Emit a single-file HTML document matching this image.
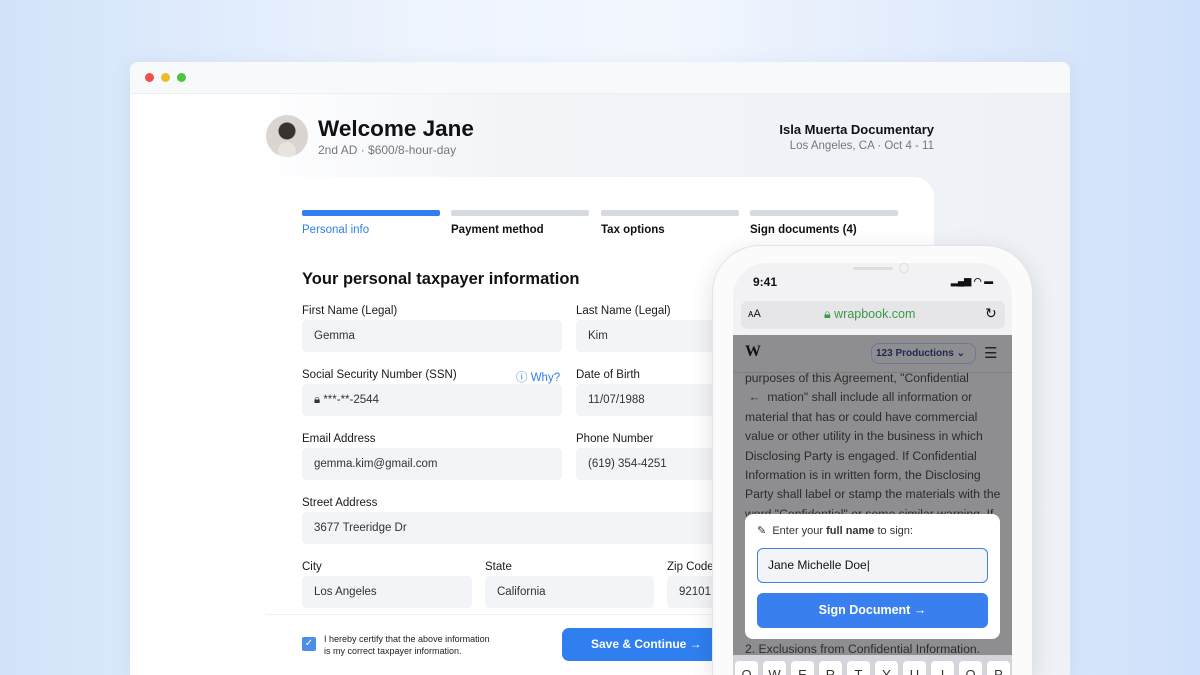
<!DOCTYPE html>
<html><head><meta charset="utf-8"><style>
*{box-sizing:border-box;margin:0;padding:0}
html{width:1200px;height:675px;overflow:hidden}
body{width:1200px;height:675px;overflow:hidden;font-family:"Liberation Sans",sans-serif;background:linear-gradient(90deg,#d2e3fa 0%,#eef4fd 35%,#f3f7fe 55%,#cfe0fa 100%);position:relative;color:#111}
.win{position:absolute;left:130px;top:62px;width:940px;height:613px;background:#f3f5f8;border-radius:8px 8px 0 0;overflow:hidden;box-shadow:0 4px 20px rgba(80,120,180,.12)}
.bar{height:32px;background:#f8f9fb;border-bottom:1px solid #eceff3;position:relative}
.dot{position:absolute;top:11px;width:9px;height:9px;border-radius:50%}
.content{position:absolute;top:32px;left:0;right:0;bottom:0;background:linear-gradient(90deg,#fff 0%,#fff 12%,#f2f4f8 40%,#eef1f6 100%)}
.abs{position:absolute}
.card{position:absolute;left:136px;top:83px;width:668px;height:498px;background:#fff;border-radius:20px 20px 0 0}
.lbl{position:absolute;font-size:11.5px;color:#1a1a1a}
.fld{position:absolute;height:32px;background:#f3f4f7;border-radius:4px;font-size:11.5px;color:#333;line-height:32px;padding-left:12px}
.step{position:absolute;top:33px;height:6px;border-radius:2px;background:#d5dae2;width:138px}
.stxt{position:absolute;top:47px;font-size:11.5px;font-weight:bold;color:#111}
.phone{position:absolute;left:712px;top:245px;width:321px;height:430px;background:#fbfbfc;border-radius:48px 48px 0 0;border:1px solid #e2e4e8;border-bottom:none;box-shadow:0 6px 24px rgba(0,0,0,.12)}
.screen{position:absolute;left:20px;top:17px;width:279px;height:413px;border-radius:34px 34px 0 0;overflow:hidden;background:#f2f2f4}
.doc{position:absolute;left:0;top:72px;width:279px;height:400px;background:#8e8e90}
.doc p{font-size:12.2px;line-height:19.4px;color:#2c2c2c;padding-left:12px;position:absolute;left:0;width:279px;white-space:nowrap}
.key{position:absolute;top:398px;width:23px;height:30px;background:#fff;border-radius:4px;font-size:13px;text-align:center;line-height:28px;color:#333}
</style></head><body>
<div class="win">
 <div class="bar"><div class="dot" style="left:15px;background:#f0514b"></div><div class="dot" style="left:31px;background:#e9bc2b"></div><div class="dot" style="left:47px;background:#4fc43f"></div></div>
 <div class="content">
  <div class="abs" style="left:136px;top:21px;width:42px;height:42px;border-radius:50%;background:radial-gradient(circle at 50% 38%,#3a3230 0 8px,#d9d6d2 9px);overflow:hidden"><div style="position:absolute;left:12px;top:27px;width:18px;height:18px;border-radius:50%;background:#e8e4de"></div></div>
  <div class="abs" style="left:188px;top:22px;font-size:22.5px;font-weight:bold">Welcome Jane</div>
  <div class="abs" style="left:188px;top:49px;font-size:12px;color:#777">2nd AD · $600/8-hour-day</div>
  <div class="abs" style="right:136px;top:28px;font-size:13px;font-weight:bold;text-align:right">Isla Muerta Documentary</div>
  <div class="abs" style="right:136px;top:46px;font-size:11.5px;color:#777;text-align:right">Los Angeles, CA · Oct 4 - 11</div>
  <div class="card">
   <div class="step" style="left:36px;background:#2f7ff0"></div>
   <div class="step" style="left:185px"></div><div class="step" style="left:335px"></div><div class="step" style="left:484px;width:148px"></div>
   <div class="stxt" style="left:36px;color:#2f7ff0;font-weight:normal">Personal info</div>
   <div class="stxt" style="left:185px">Payment method</div>
   <div class="stxt" style="left:335px">Tax options</div>
   <div class="stxt" style="left:484px">Sign documents (4)</div>
   <div class="abs" style="left:36px;top:93px;font-size:16.5px;font-weight:bold">Your personal taxpayer information</div>
   <div class="lbl" style="left:36px;top:128px">First Name (Legal)</div><div class="lbl" style="left:310px;top:128px">Last Name (Legal)</div>
   <div class="fld" style="left:36px;top:143px;width:260px">Gemma</div><div class="fld" style="left:310px;top:143px;width:200px">Kim</div>
   <div class="lbl" style="left:36px;top:192px">Social Security Number (SSN)</div><div class="lbl" style="left:250px;top:192px;color:#2f7ff0">ⓘ Why?</div><div class="lbl" style="left:310px;top:192px">Date of Birth</div>
   <div class="fld" style="left:36px;top:207px;width:260px">🔒︎ ***-**-2544</div><div class="fld" style="left:310px;top:207px;width:200px">11/07/1988</div>
   <div class="lbl" style="left:36px;top:256px">Email Address</div><div class="lbl" style="left:310px;top:256px">Phone Number</div>
   <div class="fld" style="left:36px;top:271px;width:260px">gemma.kim@gmail.com</div><div class="fld" style="left:310px;top:271px;width:200px">(619) 354-4251</div>
   <div class="lbl" style="left:36px;top:320px">Street Address</div>
   <div class="fld" style="left:36px;top:335px;width:480px">3677 Treeridge Dr</div>
   <div class="lbl" style="left:36px;top:384px">City</div><div class="lbl" style="left:219px;top:384px">State</div><div class="lbl" style="left:401px;top:384px">Zip Code</div>
   <div class="fld" style="left:36px;top:399px;width:170px">Los Angeles</div><div class="fld" style="left:219px;top:399px;width:169px">California</div><div class="fld" style="left:401px;top:399px;width:100px">92101</div>
   <div class="abs" style="left:0;top:437px;width:668px;height:1px;background:#eef0f3"></div>
   <div class="abs" style="left:36px;top:460px;width:14px;height:14px;background:#4a8ee8;border-radius:2px;color:#fff;font-size:10px;text-align:center;line-height:14px">✓</div>
   <div class="abs" style="left:58px;top:456px;font-size:9px;line-height:12px;color:#222">I hereby certify that the above information<br>is my correct taxpayer information.</div>
   <div class="abs" style="left:296px;top:451px;width:180px;height:33px;background:#2f7ff0;border-radius:7px;color:#fff;font-size:12px;font-weight:bold;line-height:33px;padding-left:29px">Save &amp; Continue →</div>
  </div>
 </div>
</div>
<div class="phone">
 <div class="screen">
  <div class="abs" style="left:120px;top:4px;width:40px;height:3px;background:#ddd;border-radius:2px"></div>
  <div class="abs" style="left:166px;top:0px;width:10px;height:10px;border-radius:50%;border:1px solid #ddd"></div>
  <div class="abs" style="left:20px;top:12px;font-size:12px;font-weight:bold">9:41</div>
  <div class="abs" style="left:218px;top:13px;font-size:9px;font-weight:bold">▂▄▆ ◠ ▬</div>
  <div class="abs" style="left:8px;top:38px;width:264px;height:28px;background:#e6e6e9;border-radius:7px"></div>
  <div class="abs" style="left:15px;top:45px;font-size:11px">ᴀA</div>
  <div class="abs" style="left:91px;top:44px;font-size:12.5px;color:#3a9a44">🔒︎ wrapbook.com</div>
  <div class="abs" style="left:252px;top:42px;font-size:14px">↻</div>
  <div class="doc">
   <div class="abs" style="left:12px;top:8px;font-size:16px;font-weight:bold;font-family:'Liberation Serif',serif;color:#111">W</div>
   <div class="abs" style="left:138px;top:8px;width:105px;height:21px;border:1px solid #6f7a92;border-radius:8px;font-size:10px;font-weight:bold;color:#1b2a55;line-height:19px;padding-left:4px">123 Productions ⌄</div>
   <div class="abs" style="left:251px;top:9px;font-size:15px;color:#222">☰</div>
   <div class="abs" style="left:0;top:37px;width:279px;height:1px;background:#7f7f80"></div>
   <p style="top:34px">purposes of this Agreement, "Confidential<br>&nbsp;←&nbsp;&nbsp;mation" shall include all information or<br>material that has or could have commercial<br>value or other utility in the business in which<br>Disclosing Party is engaged. If Confidential<br>Information is in written form, the Disclosing<br>Party shall label or stamp the materials with the<br>word "Confidential" or some similar warning. If</p>
   <p style="top:305px">2. Exclusions from Confidential Information.</p>
  </div>
  <div class="abs" style="left:12px;top:251px;width:255px;height:125px;background:#fff;border-radius:8px">
   <div class="abs" style="left:12px;top:10px;font-size:11px;color:#333">✎&nbsp; Enter your <b>full name</b> to sign:</div>
   <div class="abs" style="left:12px;top:34px;width:231px;height:35px;border:1.5px solid #3f7fe8;border-radius:6px;background:#f3f4f7;font-size:12px;line-height:32px;padding-left:10px">Jane Michelle Doe|</div>
   <div class="abs" style="left:12px;top:79px;width:231px;height:35px;background:#3a7ff0;border-radius:6px;color:#fff;font-size:12.5px;font-weight:bold;text-align:center;line-height:35px">Sign Document →</div>
  </div>
  <div class="abs" style="left:0;top:392px;width:279px;height:50px;background:#d3d5da"></div>
  <div class="key" style="left:2px">Q</div><div class="key" style="left:30px">W</div><div class="key" style="left:58px">E</div><div class="key" style="left:86px">R</div><div class="key" style="left:114px">T</div><div class="key" style="left:142px">Y</div><div class="key" style="left:170px">U</div><div class="key" style="left:198px">I</div><div class="key" style="left:226px">O</div><div class="key" style="left:254px">P</div>
 </div>
</div>
</body></html>
